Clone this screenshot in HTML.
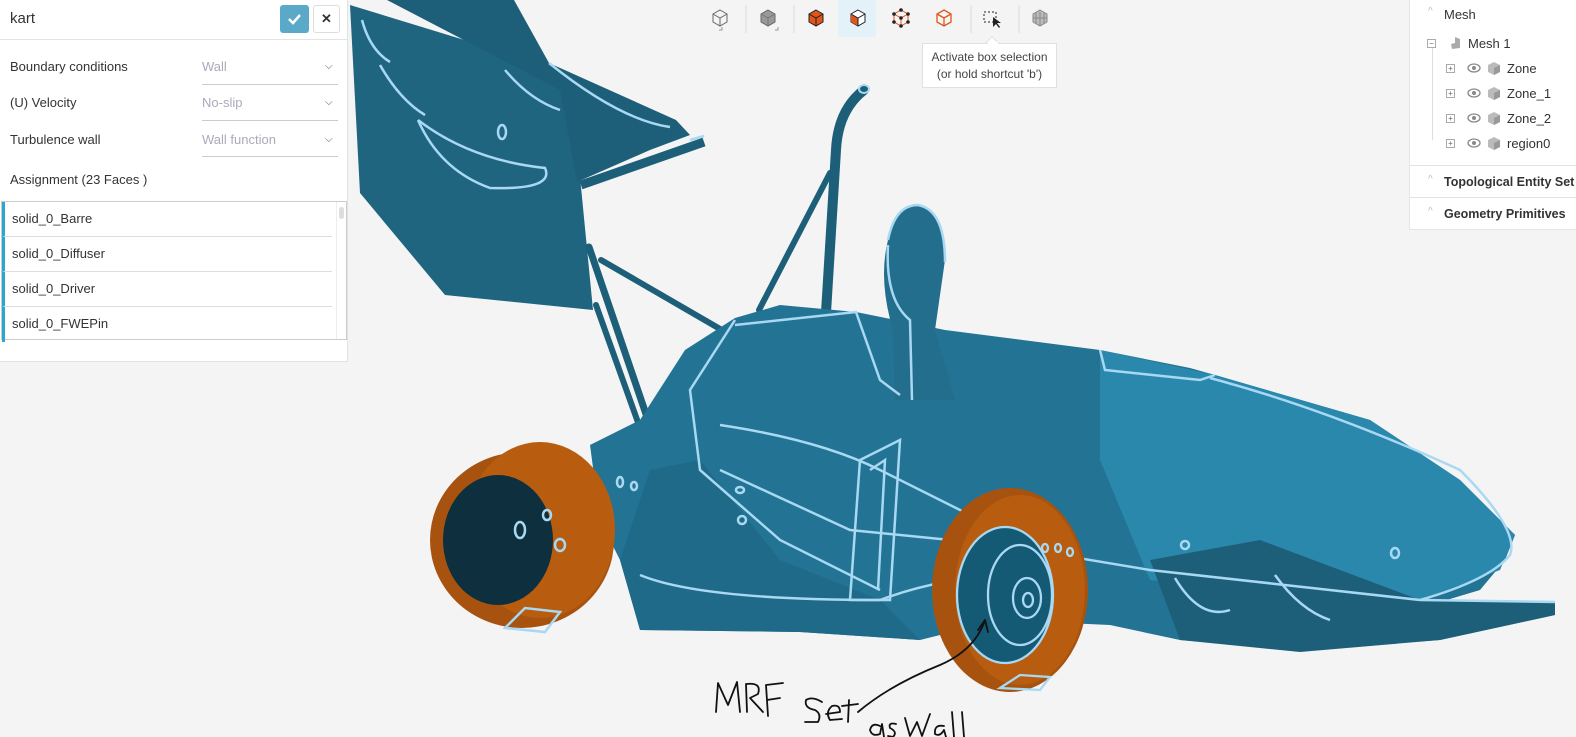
<!DOCTYPE html>
<html><head><meta charset="utf-8"><style>
*{box-sizing:border-box;margin:0;padding:0}
body{width:1576px;height:737px;overflow:hidden;background:#f4f4f4;font-family:"Liberation Sans",sans-serif;position:relative;color:#333}
#car{position:absolute;left:0;top:0}
.panel{position:absolute;left:0;top:0;width:348px;height:362px;background:#fff;border-right:1px solid #e2e2e2;border-bottom:1px solid #e2e2e2}
.hdr{height:40px;border-bottom:1px solid #e3e3e3;position:relative}
.hdr .t{position:absolute;left:10px;top:10px;font-size:15px;color:#333}
.ok{position:absolute;left:280px;top:5px;width:29px;height:28px;background:#5aa9c9;border-radius:3px}
.x{position:absolute;left:313px;top:5px;width:27px;height:28px;border:1px solid #ddd;border-radius:3px;font-size:13px;font-weight:bold;text-align:center;line-height:26px}
.row{position:absolute;left:10px;font-size:13px;color:#333}
.sel{position:absolute;left:202px;width:136px;height:1px;background:#ccc}
.selt{position:absolute;left:202px;font-size:13px;color:#aab}
.chev{position:absolute;left:325px;font-size:10px;color:#555}
.list{position:absolute;left:1px;top:201px;width:346px;height:139px;border:1px solid #ccc}
.it{height:35px;border-bottom:1px solid #ddd;border-left:3px solid #2aa6d2;font-size:13px;padding-left:7px;line-height:34px;width:330px}
.tb{position:absolute;top:0;height:38px}
.tip{position:absolute;left:922px;top:43px;width:135px;height:45px;background:#fff;border:1px solid #e0e0e0;font-size:12px;color:#444;text-align:center;line-height:17px;padding-top:5px}
.rp{position:absolute;left:1409px;top:0;width:167px;height:230px;background:#fff;border-left:1px solid #e5e5e5;border-bottom:1px solid #e5e5e5;font-size:13px;color:#333}
.rp div,.rp svg{position:absolute;white-space:nowrap}
.pl{width:9px;height:9px;border:1px solid #aaa;font-size:8px;line-height:7px;text-align:center;color:#666}
</style></head><body>
<svg id="car" width="1576" height="737" viewBox="0 0 1576 737">
<!-- rear wing -->
<polygon points="350,5 569,72 581,187 593,310 445,295 360,193" fill="#1f6580"/>
<polygon points="387,0 514,0 549,63 676,120 690,135 650,150 577,182 560,90" fill="#1d5f79"/>
<line x1="581" y1="185" x2="704" y2="142" stroke="#1d5f79" stroke-width="9"/>
<g fill="none" stroke="#a8d8f2" stroke-width="2.5">
<path d="M362,20 Q370,50 390,62 M380,65 Q400,100 425,115 M418,120 Q470,160 545,168 Q555,190 490,188 Q440,170 418,120 M505,70 Q530,100 560,110 M549,63 Q620,120 670,127 M690,140 L704,136"/>
<ellipse cx="502" cy="132" rx="4" ry="7"/>
</g>
<!-- struts -->
<g stroke="#1d5f79" stroke-linecap="round">
<line x1="589" y1="247" x2="648" y2="420" stroke-width="7"/>
<line x1="596" y1="305" x2="640" y2="428" stroke-width="6"/>
<line x1="601" y1="260" x2="727" y2="333" stroke-width="6"/>
<line x1="830" y1="173" x2="759" y2="310" stroke-width="6"/>
<path d="M864,90 Q838,110 836,150 L820,410" fill="none" stroke-width="10"/>
</g>
<ellipse cx="864" cy="89" rx="5" ry="4" fill="none" stroke="#a8d8f2" stroke-width="2"/>
<!-- body -->
<polygon points="590,445 640,420 685,350 735,318 780,305 856,312 945,330 1100,350 1190,368 1215,375 1370,420 1460,480 1515,535 1505,560 1480,590 1440,602 1555,602 1555,615 1440,640 1300,650 1180,640 1110,625 1000,620 920,640 800,632 640,630 620,560 600,520" fill="#227394"/>
<polygon points="1100,350 1215,375 1370,420 1460,480 1515,535 1500,570 1420,600 1300,600 1150,580 1100,460" fill="#2a88ad"/>
<polygon points="1150,560 1260,540 1420,600 1555,602 1555,615 1440,640 1300,652 1180,640" fill="#1d5f79"/>
<polygon points="620,560 650,470 700,460 780,560 880,600 920,640 800,632 640,630" fill="#1f6a88"/>
<!-- headrest -->
<path d="M888,240 Q895,205 918,205 Q945,210 945,260 L935,330 L955,400 L895,400 L893,330 Q878,280 888,240Z" fill="#236e8d"/>
<g fill="none" stroke="#a8d8f2" stroke-width="2.5">
<path d="M888,240 Q895,205 918,205 Q945,210 945,262 M888,245 Q885,300 910,320 L912,400"/>
<path d="M735,320 L690,390 L700,470 L780,540 L880,590 M735,325 L856,312 L880,380 L900,395"/>
<path d="M1100,350 L1105,370 L1200,380 L1215,375 M1210,378 Q1330,410 1460,470 Q1520,530 1510,555 Q1490,580 1420,600 L1555,602"/>
<path d="M720,470 L850,530 L1000,545 L1150,570 L1420,600 M640,575 Q700,600 880,600 Q960,570 1080,570"/>
<path d="M860,460 L900,440 L890,600 L850,600Z M870,470 L885,460 L878,590"/>
<path d="M720,425 Q820,440 880,470 L1000,530"/>
<path d="M1175,578 Q1200,620 1230,610 M1275,575 Q1300,610 1330,620"/>
<ellipse cx="1185" cy="545" rx="4" ry="4"/><ellipse cx="1395" cy="553" rx="4" ry="5"/><ellipse cx="740" cy="490" rx="4" ry="3"/><ellipse cx="742" cy="520" rx="4" ry="4"/><ellipse cx="620" cy="482" rx="3" ry="5"/><ellipse cx="634" cy="486" rx="3" ry="4"/>
</g>
<!-- rear tire -->
<ellipse cx="522" cy="540" rx="92" ry="88" fill="#a7530f"/>
<ellipse cx="540" cy="530" rx="75" ry="88" fill="#b85c10"/>
<ellipse cx="498" cy="540" rx="55" ry="65" fill="#0d2f3e"/>
<g fill="none" stroke="#a8d8f2" stroke-width="2.5"><ellipse cx="520" cy="530" rx="5" ry="8"/><ellipse cx="547" cy="515" rx="4" ry="5"/><ellipse cx="560" cy="545" rx="5" ry="6"/><path d="M505,628 L525,608 L560,612 L545,632Z"/></g>
<!-- front tire -->
<ellipse cx="1010" cy="590" rx="78" ry="102" fill="#a7530f"/>
<ellipse cx="1020" cy="590" rx="65" ry="95" fill="#b85c10"/>
<ellipse cx="1005" cy="595" rx="48" ry="68" fill="#155a74"/>
<g fill="none" stroke="#a8d8f2" stroke-width="2.3"><ellipse cx="1005" cy="595" rx="48" ry="68"/><ellipse cx="1020" cy="595" rx="32" ry="50"/><ellipse cx="1027" cy="598" rx="14" ry="20"/><ellipse cx="1028" cy="600" rx="5" ry="7"/><path d="M1000,688 L1020,675 L1050,677 L1040,690Z"/><ellipse cx="1045" cy="548" rx="3" ry="4"/><ellipse cx="1058" cy="548" rx="3" ry="4"/><ellipse cx="1070" cy="552" rx="3" ry="4"/></g>
<!-- annotation -->
<g fill="none" stroke="#111" stroke-width="1.8" stroke-linecap="round" stroke-linejoin="round">
<path d="M716,712 L718,683 L728,705 L737,682 L740,712"/>
<path d="M747,712 L746,684 Q762,682 758,694 L750,698 L763,712"/>
<path d="M768,716 L766,685 L783,683 M767,700 L780,698"/>
<path d="M822,702 Q812,696 806,700 Q804,708 815,710 Q822,714 818,722 L805,722"/>
<path d="M826,714 L840,712 Q840,704 832,706 Q825,712 830,720 L842,719"/>
<path d="M849,700 L848,722 M842,706 L858,704"/>
<path d="M858,712 Q890,685 940,665 Q975,650 985,620 M978,630 L985,620 L988,632"/>
<path d="M880,726 Q872,722 870,730 Q872,737 880,734 L882,724 L884,737 M896,724 Q888,722 890,728 Q898,732 893,737 L888,736"/>
<path d="M905,718 L910,736 L917,722 L922,736 L930,714"/>
<path d="M944,726 Q934,724 935,734 Q940,737 944,730 L946,737"/>
<path d="M952,712 L954,737 M962,712 L964,737"/>
</g>
</svg>

<div class="panel">
 <div class="hdr"><div class="t">kart</div>
 <div class="ok"><svg width="29" height="28"><path d="M9,14 L13,18 L20,10" stroke="#fff" stroke-width="2.5" fill="none"/></svg></div>
 <div class="x">✕</div></div>
 <div class="row" style="top:59px">Boundary conditions</div><div class="selt" style="top:59px">Wall</div><div class="chev" style="top:61px">⌵</div><div class="sel" style="top:84px"></div>
 <div class="row" style="top:95px">(U) Velocity</div><div class="selt" style="top:95px">No-slip</div><div class="chev" style="top:97px">⌵</div><div class="sel" style="top:120px"></div>
 <div class="row" style="top:132px">Turbulence wall</div><div class="selt" style="top:132px">Wall function</div><div class="chev" style="top:134px">⌵</div><div class="sel" style="top:156px"></div>
 <div class="row" style="top:172px">Assignment (23 Faces )</div>
 <div class="list">
  <div class="it">solid_0_Barre</div><div class="it">solid_0_Diffuser</div><div class="it">solid_0_Driver</div><div class="it" style="border-bottom:none">solid_0_FWEPin</div>
  <div style="position:absolute;left:334px;top:0;width:10px;height:137px;border-left:1px solid #eee"><div style="margin:5px 2px;width:5px;height:12px;background:#ddd;border-radius:3px"></div></div>
 </div>
</div>

<!-- toolbar -->
<div class="tb" style="left:838px;width:38px;background:#e3f1f8;border-radius:3px;height:37px"></div>
<svg style="position:absolute;left:700px;top:0" width="360" height="38">
<g stroke="#ddd"><line x1="46" y1="5" x2="46" y2="33"/><line x1="94" y1="5" x2="94" y2="33"/><line x1="271" y1="5" x2="271" y2="33"/><line x1="319" y1="5" x2="319" y2="33"/></g>
<g transform="translate(13,10)" fill="none" stroke="#666"><path d="M7,0 L14,4 L14,12 L7,16 L0,12 L0,4Z M0,4 L7,8 L14,4 M7,8 L7,16"/></g>
<path d="M19,30 L22,30 L22,27" stroke="#999" fill="none"/>
<g transform="translate(61,10)" stroke="#666"><path d="M7,0 L14,4 L14,12 L7,16 L0,12 L0,4Z" fill="#999"/><path d="M0,4 L7,8 L14,4 M7,8 L7,16" fill="none" stroke="#777"/></g>
<path d="M75,30 L78,30 L78,27" stroke="#999" fill="none"/>
<g transform="translate(109,10)"><path d="M7,0 L14,4 L14,12 L7,16 L0,12 L0,4Z" fill="#e0561a" stroke="#222"/><path d="M0,4 L7,8 L14,4 M7,8 L7,16" fill="none" stroke="#222"/></g>
<g transform="translate(151,10)"><path d="M7,0 L14,4 L14,12 L7,16 L0,12 L0,4Z" fill="#fff" stroke="#222"/><path d="M0,4 L7,8 L7,16 L0,12Z" fill="#e0561a"/><path d="M0,4 L7,8 L14,4 M7,8 L7,16" fill="none" stroke="#222"/></g>
<g transform="translate(194,10)"><path d="M7,0 L14,4 L14,12 L7,16 L0,12 L0,4Z M0,4 L7,8 L14,4 M7,8 L7,16" fill="none" stroke="#e0561a"/><g fill="#222"><circle cx="7" cy="0" r="1.8"/><circle cx="14" cy="4" r="1.8"/><circle cx="14" cy="12" r="1.8"/><circle cx="7" cy="16" r="1.8"/><circle cx="0" cy="12" r="1.8"/><circle cx="0" cy="4" r="1.8"/><circle cx="7" cy="8" r="1.8"/></g></g>
<g transform="translate(237,10)" fill="none" stroke="#e0561a" stroke-width="1.3"><path d="M7,0 L14,4 L14,12 L7,16 L0,12 L0,4Z M0,4 L7,8 L14,4 M7,8 L7,16"/></g>
<rect x="284" y="12" width="12" height="10" fill="none" stroke="#222" stroke-dasharray="2,2"/>
<path d="M293,17 L293,27 L296,24 L299,28 L300,27 L297,23 L301,23Z" fill="#222"/>
<g transform="translate(333,10)" stroke="#888" fill="#bbb"><path d="M7,0 L14,4 L14,12 L7,16 L0,12 L0,4Z"/><path d="M3,3 L3,14 M7,2 L7,16 M11,3 L11,14 M0,8 L14,8" fill="none"/></g>
</svg>
<div style="position:absolute;left:987px;top:38px;width:10px;height:10px;background:#fff;border-left:1px solid #e0e0e0;border-top:1px solid #e0e0e0;transform:rotate(45deg)"></div>
<div class="tip">Activate box selection<br>(or hold shortcut 'b')</div>
<div style="position:absolute;left:988px;top:42px;width:10px;height:3px;background:#fff"></div>

<!-- right panel -->
<div class="rp">
 <div style="left:18px;top:6px;color:#bbb;font-size:10px">^</div><div style="left:34px;top:7px">Mesh</div>
 <div style="left:22px;top:48px;width:1px;height:92px;background:#ddd"></div>
 <div class="pl" style="left:17px;top:39px;background:#fff">−</div>
 <svg style="left:38px;top:36px" width="14" height="14"><path d="M7,1 L12,3 L12,12 L4,13 L3,8 L7,7Z" fill="#aaa"/></svg>
 <div style="left:58px;top:36px">Mesh 1</div>
 <div class="pl" style="left:36px;top:64px;background:#fff">+</div><svg style="left:57px;top:62px" width="14" height="12"><ellipse cx="7" cy="6" rx="6" ry="4" fill="none" stroke="#888" stroke-width="1.3"/><circle cx="7" cy="6" r="2" fill="#888"/></svg><svg style="left:77px;top:61px" width="14" height="14"><path d="M7,1 L13,4 L13,11 L7,14 L1,11 L1,4Z" fill="#bbb"/><path d="M7,7 L13,4 L13,11 L7,14Z" fill="#999"/></svg><div style="left:97px;top:61px">Zone</div>
 <div class="pl" style="left:36px;top:89px;background:#fff">+</div><svg style="left:57px;top:87px" width="14" height="12"><ellipse cx="7" cy="6" rx="6" ry="4" fill="none" stroke="#888" stroke-width="1.3"/><circle cx="7" cy="6" r="2" fill="#888"/></svg><svg style="left:77px;top:86px" width="14" height="14"><path d="M7,1 L13,4 L13,11 L7,14 L1,11 L1,4Z" fill="#bbb"/><path d="M7,7 L13,4 L13,11 L7,14Z" fill="#999"/></svg><div style="left:97px;top:86px">Zone_1</div>
 <div class="pl" style="left:36px;top:114px;background:#fff">+</div><svg style="left:57px;top:112px" width="14" height="12"><ellipse cx="7" cy="6" rx="6" ry="4" fill="none" stroke="#888" stroke-width="1.3"/><circle cx="7" cy="6" r="2" fill="#888"/></svg><svg style="left:77px;top:111px" width="14" height="14"><path d="M7,1 L13,4 L13,11 L7,14 L1,11 L1,4Z" fill="#bbb"/><path d="M7,7 L13,4 L13,11 L7,14Z" fill="#999"/></svg><div style="left:97px;top:111px">Zone_2</div>
 <div class="pl" style="left:36px;top:139px;background:#fff">+</div><svg style="left:57px;top:137px" width="14" height="12"><ellipse cx="7" cy="6" rx="6" ry="4" fill="none" stroke="#888" stroke-width="1.3"/><circle cx="7" cy="6" r="2" fill="#888"/></svg><svg style="left:77px;top:136px" width="14" height="14"><path d="M7,1 L13,4 L13,11 L7,14 L1,11 L1,4Z" fill="#bbb"/><path d="M7,7 L13,4 L13,11 L7,14Z" fill="#999"/></svg><div style="left:97px;top:136px">region0</div>
 <div style="left:0;top:165px;width:167px;height:1px;background:#e3e3e3"></div>
 <div style="left:18px;top:174px;color:#bbb;font-size:10px">^</div><div style="left:34px;top:175px;font-weight:bold;font-size:12.5px">Topological Entity Set</div>
 <div style="left:0;top:197px;width:167px;height:1px;background:#e3e3e3"></div>
 <div style="left:18px;top:206px;color:#bbb;font-size:10px">^</div><div style="left:34px;top:207px;font-weight:bold;font-size:12.5px">Geometry Primitives</div>
</div>
</body></html>
